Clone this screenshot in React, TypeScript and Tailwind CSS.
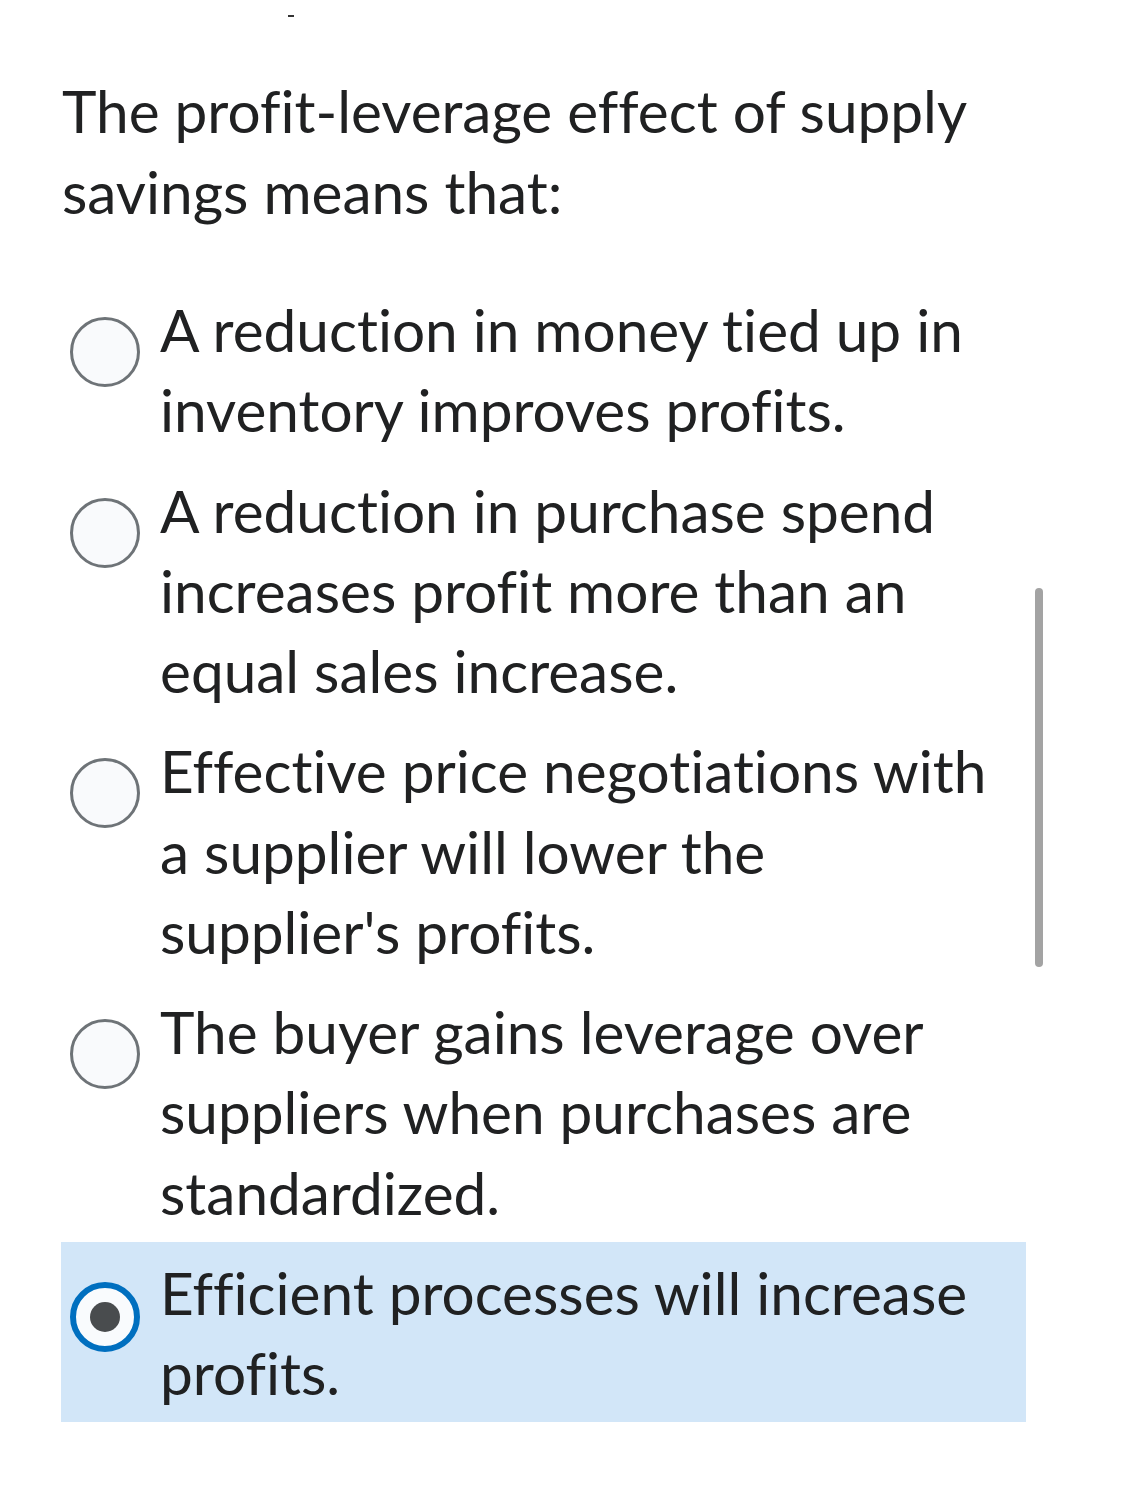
import React from "react";

interface OptionProps {
  text: string;
  selected?: boolean;
}

const options: OptionProps[] = [
  { text: "A reduction in money tied up in inventory improves profits." },
  {
    text: "A reduction in purchase spend increases profit more than an equal sales increase.",
  },
  {
    text: "Effective price negotiations with a supplier will lower the supplier's profits.",
  },
  {
    text: "The buyer gains leverage over suppliers when purchases are standardized.",
  },
  { text: "Efficient processes will increase profits.", selected: true },
];

const Radio = ({ selected }: { selected?: boolean }) => {
  if (selected) {
    return (
      <span className="mt-[30px] flex h-[70px] w-[70px] shrink-0 items-center justify-center rounded-full border-[6px] border-[#006fbf] bg-[#f9fbfd]">
        <span className="h-[30px] w-[30px] rounded-full bg-[#494c4e]" />
      </span>
    );
  }
  return (
    <span className="mt-[28px] h-[70px] w-[70px] shrink-0 rounded-full border-[3px] border-[#6e7377] bg-[#f9fafc]" />
  );
};

const Option = ({ text, selected }: OptionProps) => {
  return (
    <label
      className={`flex items-start gap-[20px] py-[10px] pl-[9px] pr-[26px] ${
        selected ? "bg-[#d2e6f8]" : ""
      }`}
    >
      <Radio selected={selected} />
      <span className="text-[58.5px] leading-[80.25px] text-[#202122]">{text}</span>
    </label>
  );
};

export default function App() {
  return (
    <div className="relative min-h-[1489px] w-[1142px] bg-white font-['Lato',_sans-serif] [font-variant-ligatures:none]">
      <div className="pl-[288px] pt-[15px]">
        <div className="h-[2px] w-[6px] bg-[#333]" />
      </div>
      <div className="w-[1026px] pl-[61px] pt-[53px]">
        <h1 className="pl-px text-[58.5px] leading-[80.5px] font-normal text-[#202122]">
          The profit-leverage effect of supply savings means that:
        </h1>
        <div className="mt-[48px] flex flex-col">
          {options.map((o) => (
            <Option key={o.text} text={o.text} selected={o.selected} />
          ))}
        </div>
      </div>
      {/* scroll indicator */}
      <div className="absolute left-[1035px] top-[588px] h-[379px] w-[8px] rounded-full bg-[#a3a3a3]" />
    </div>
  );
}
